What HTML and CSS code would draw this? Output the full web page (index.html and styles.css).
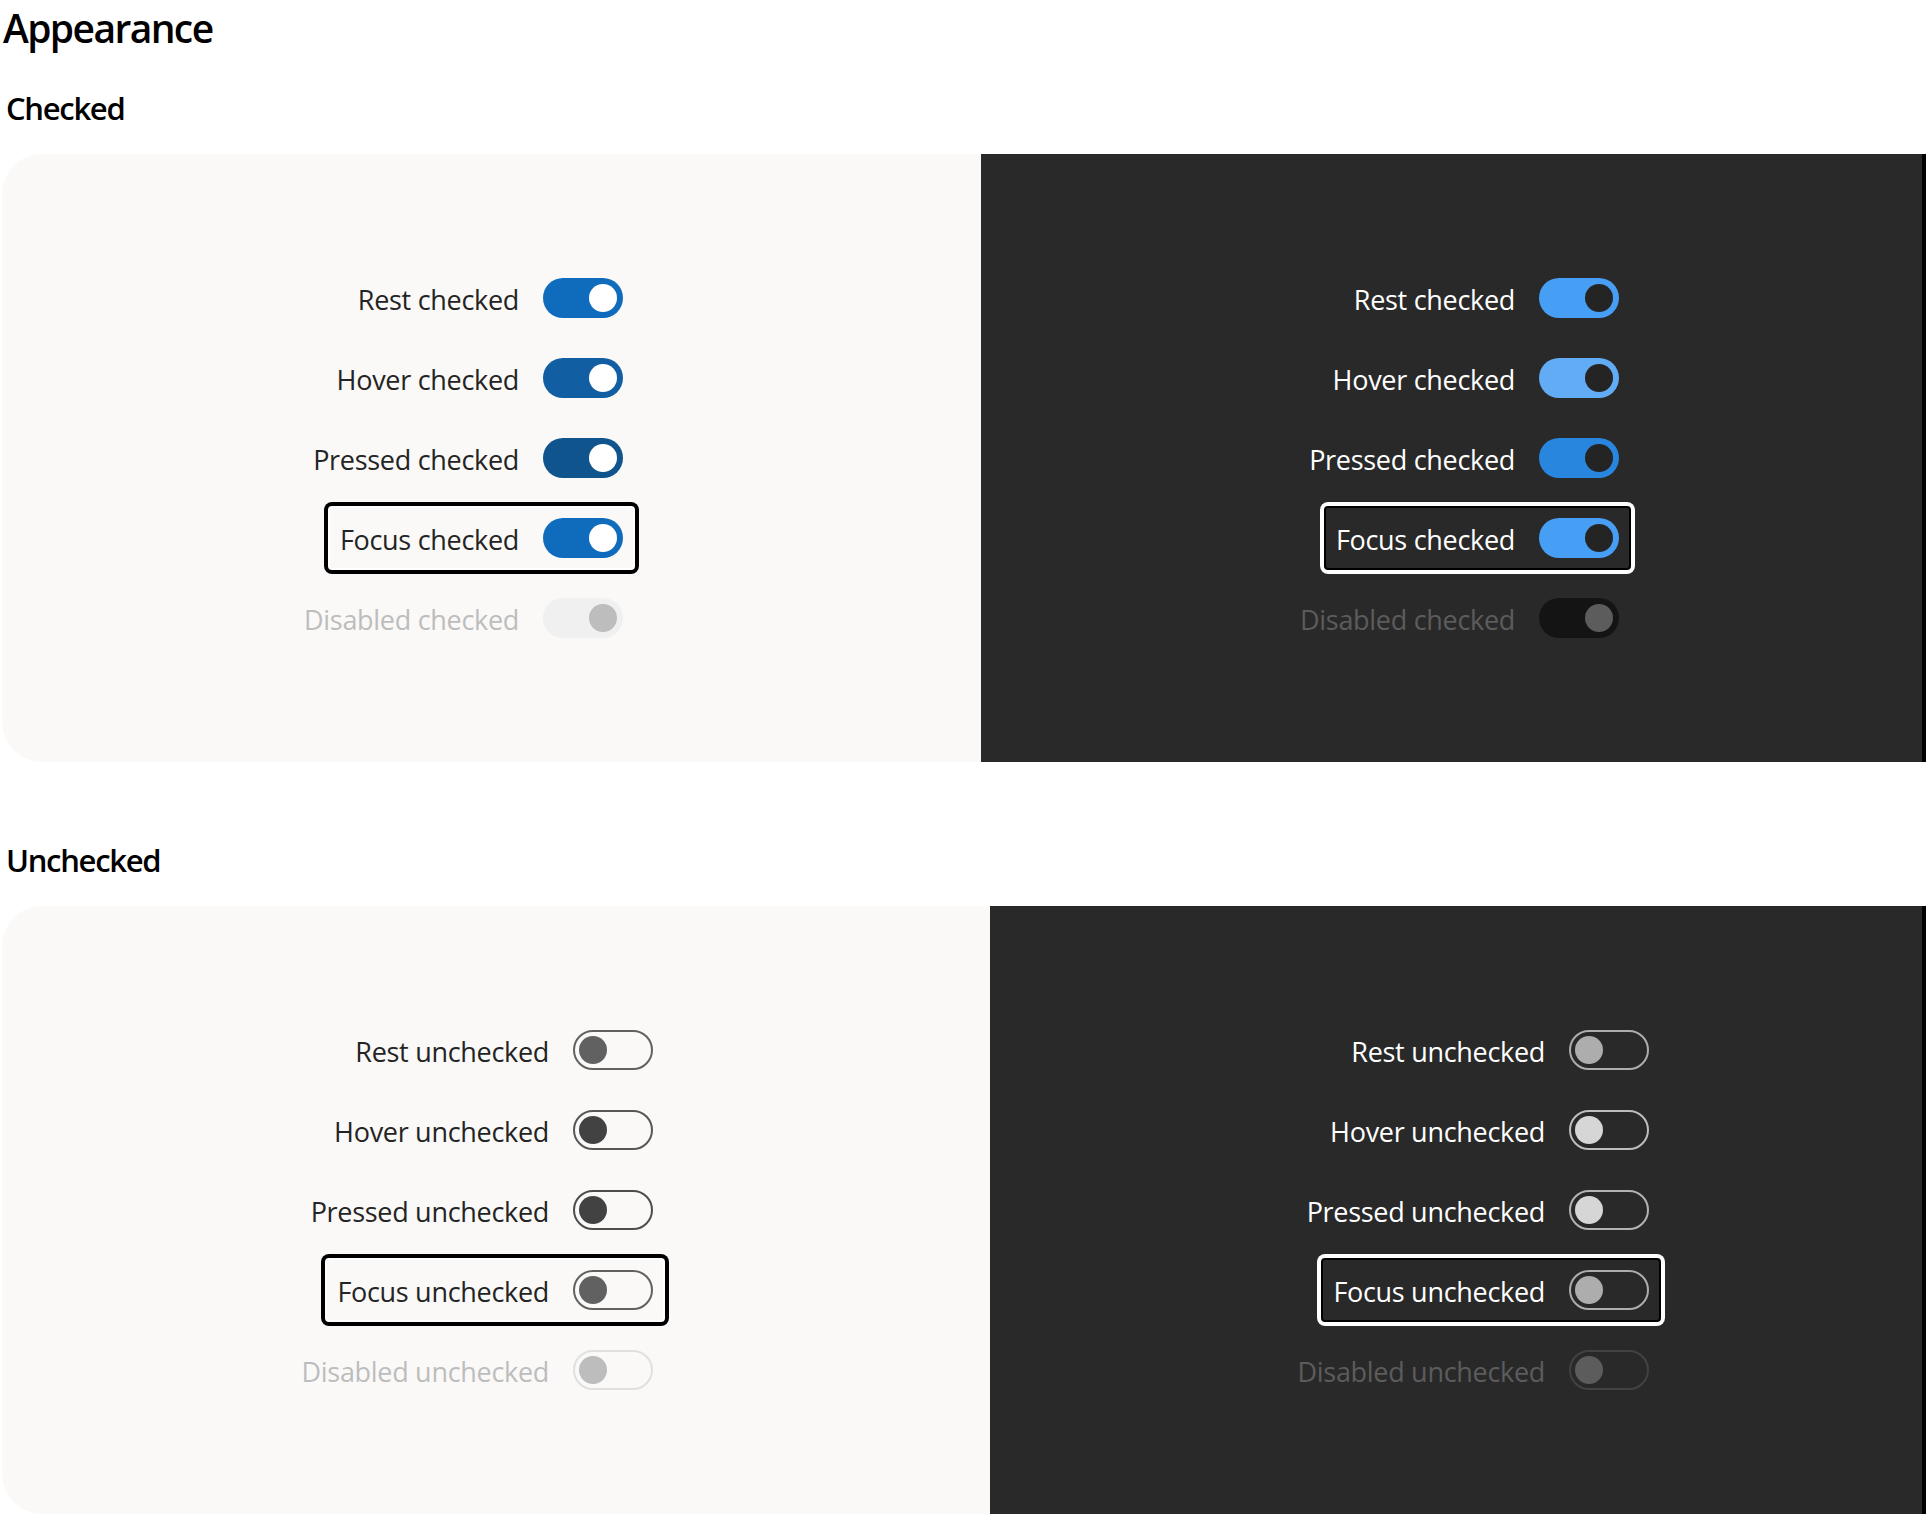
FILE: index.html
```html
<!DOCTYPE html>
<html lang="en">
<head>
<meta charset="utf-8">
<title>Switch – Appearance</title>
<link rel="stylesheet" href="styles.css">
</head>
<body>
<main class="page">
  <h1 class="title">Appearance</h1>

  <h2 class="section-title">Checked</h2>
  <section class="demo demo--checked">
    <div class="half half--light">
      <div class="stack">
        <div class="sw is-on st-rest"><span class="sw-label">Rest checked</span><span class="track"><span class="thumb"></span></span></div>
        <div class="sw is-on st-hover"><span class="sw-label">Hover checked</span><span class="track"><span class="thumb"></span></span></div>
        <div class="sw is-on st-pressed"><span class="sw-label">Pressed checked</span><span class="track"><span class="thumb"></span></span></div>
        <div class="sw is-on st-focus"><span class="sw-label">Focus checked</span><span class="track"><span class="thumb"></span></span></div>
        <div class="sw is-on st-disabled"><span class="sw-label">Disabled checked</span><span class="track"><span class="thumb"></span></span></div>
      </div>
    </div>
    <div class="half half--dark">
      <div class="stack">
        <div class="sw is-on st-rest"><span class="sw-label">Rest checked</span><span class="track"><span class="thumb"></span></span></div>
        <div class="sw is-on st-hover"><span class="sw-label">Hover checked</span><span class="track"><span class="thumb"></span></span></div>
        <div class="sw is-on st-pressed"><span class="sw-label">Pressed checked</span><span class="track"><span class="thumb"></span></span></div>
        <div class="sw is-on st-focus"><span class="sw-label">Focus checked</span><span class="track"><span class="thumb"></span></span></div>
        <div class="sw is-on st-disabled"><span class="sw-label">Disabled checked</span><span class="track"><span class="thumb"></span></span></div>
      </div>
    </div>
  </section>

  <h2 class="section-title section-title--second">Unchecked</h2>
  <section class="demo demo--unchecked">
    <div class="half half--light">
      <div class="stack">
        <div class="sw is-off st-rest"><span class="sw-label">Rest unchecked</span><span class="track"><span class="thumb"></span></span></div>
        <div class="sw is-off st-hover"><span class="sw-label">Hover unchecked</span><span class="track"><span class="thumb"></span></span></div>
        <div class="sw is-off st-pressed"><span class="sw-label">Pressed unchecked</span><span class="track"><span class="thumb"></span></span></div>
        <div class="sw is-off st-focus"><span class="sw-label">Focus unchecked</span><span class="track"><span class="thumb"></span></span></div>
        <div class="sw is-off st-disabled"><span class="sw-label">Disabled unchecked</span><span class="track"><span class="thumb"></span></span></div>
      </div>
    </div>
    <div class="half half--dark">
      <div class="stack">
        <div class="sw is-off st-rest"><span class="sw-label">Rest unchecked</span><span class="track"><span class="thumb"></span></span></div>
        <div class="sw is-off st-hover"><span class="sw-label">Hover unchecked</span><span class="track"><span class="thumb"></span></span></div>
        <div class="sw is-off st-pressed"><span class="sw-label">Pressed unchecked</span><span class="track"><span class="thumb"></span></span></div>
        <div class="sw is-off st-focus"><span class="sw-label">Focus unchecked</span><span class="track"><span class="thumb"></span></span></div>
        <div class="sw is-off st-disabled"><span class="sw-label">Disabled unchecked</span><span class="track"><span class="thumb"></span></span></div>
      </div>
    </div>
  </section>
</main>
</body>
</html>
```

FILE: styles.css
```css
* { box-sizing: border-box; }

html, body {
  margin: 0;
  padding: 0;
  background: #ffffff;
}

body {
  font-family: "Open Sans", "Noto Sans", "Liberation Sans", sans-serif;
  color: #242424;
  overflow: hidden;
}

.page {
  width: 1926px;
  height: 1514px;
  padding-left: 2px;
}

.title {
  margin: 0;
  padding: 4px 0 0 1px;
  font-size: 39px;
  line-height: 48px;
  font-weight: 600;
  letter-spacing: -1.6px;
  color: #000000;
}

.section-title {
  margin: 36px 0 26px 0;
  padding-left: 4px;
  font-size: 31px;
  line-height: 40px;
  font-weight: 600;
  letter-spacing: -1.3px;
  color: #000000;
}

.section-title--second {
  margin-top: 78px;
}

.demo {
  display: flex;
  height: 608px;
}

.half {
  display: flex;
  align-items: center;
  justify-content: flex-end;
}

.half--light {
  background: #faf9f8;
  border-radius: 40px 0 0 40px;
}

.half--dark {
  flex: 1;
  background: #292929;
  border-right: 4px solid #000000;
}

.demo--checked .half--light { width: 979px; padding-right: 342px; }
.demo--checked .half--dark { padding-right: 287px; }
.demo--unchecked .half--light { width: 988px; padding-right: 321px; }
.demo--unchecked .half--dark { padding-right: 257px; }

.stack {
  display: flex;
  flex-direction: column;
  align-items: flex-end;
  gap: 8px;
}

/* switch row */
.sw {
  display: flex;
  align-items: center;
  height: 72px;
  padding: 16px;
  gap: 24px;
  border-radius: 8px;
}

.sw-label {
  font-size: 27px;
  line-height: 40px;
  padding-top: 3px;
  letter-spacing: -0.3px;
  white-space: nowrap;
}

.half--dark .sw-label { color: #ffffff; }
.half--light .st-disabled .sw-label { color: #bdbdbd; }
.half--dark .st-disabled .sw-label { color: #5c5c5c; }

.track {
  display: flex;
  align-items: center;
  width: 80px;
  height: 40px;
  padding: 0 4px;
  border: 2px solid transparent;
  border-radius: 20px;
}

.is-on .track { justify-content: flex-end; }
.is-off .track { justify-content: flex-start; }

.thumb {
  width: 28px;
  height: 28px;
  border-radius: 50%;
}

/* focus ring */
.half--light .st-focus { box-shadow: inset 0 0 0 4px #000000, inset 0 0 0 6px #ffffff; }
.half--dark .st-focus { box-shadow: inset 0 0 0 4px #ffffff, inset 0 0 0 6px #000000; }

/* light, checked */
.half--light .is-on .track { background: #0f6cbd; }
.half--light .is-on .thumb { background: #ffffff; }
.half--light .is-on.st-hover .track { background: #115ea3; }
.half--light .is-on.st-pressed .track { background: #0f548c; }
.half--light .is-on.st-disabled .track { background: #f0f0f0; }
.half--light .is-on.st-disabled .thumb { background: #bdbdbd; }

/* dark, checked */
.half--dark .is-on .track { background: #479ef5; }
.half--dark .is-on .thumb { background: #242424; }
.half--dark .is-on.st-hover .track { background: #62abf5; }
.half--dark .is-on.st-pressed .track { background: #2886de; }
.half--dark .is-on.st-disabled .track { background: #141414; }
.half--dark .is-on.st-disabled .thumb { background: #5c5c5c; }

/* light, unchecked */
.half--light .is-off .track { border-color: #616161; }
.half--light .is-off .thumb { background: #616161; }
.half--light .is-off.st-hover .track { border-color: #575757; }
.half--light .is-off.st-hover .thumb { background: #424242; }
.half--light .is-off.st-pressed .track { border-color: #4d4d4d; }
.half--light .is-off.st-pressed .thumb { background: #424242; }
.half--light .is-off.st-disabled .track { border-color: #e0e0e0; }
.half--light .is-off.st-disabled .thumb { background: #bdbdbd; }

/* dark, unchecked */
.half--dark .is-off .track { border-color: #adadad; }
.half--dark .is-off .thumb { background: #adadad; }
.half--dark .is-off.st-hover .track { border-color: #bdbdbd; }
.half--dark .is-off.st-hover .thumb { background: #d6d6d6; }
.half--dark .is-off.st-pressed .track { border-color: #b3b3b3; }
.half--dark .is-off.st-pressed .thumb { background: #d6d6d6; }
.half--dark .is-off.st-disabled .track { border-color: #424242; }
.half--dark .is-off.st-disabled .thumb { background: #5c5c5c; }
```
